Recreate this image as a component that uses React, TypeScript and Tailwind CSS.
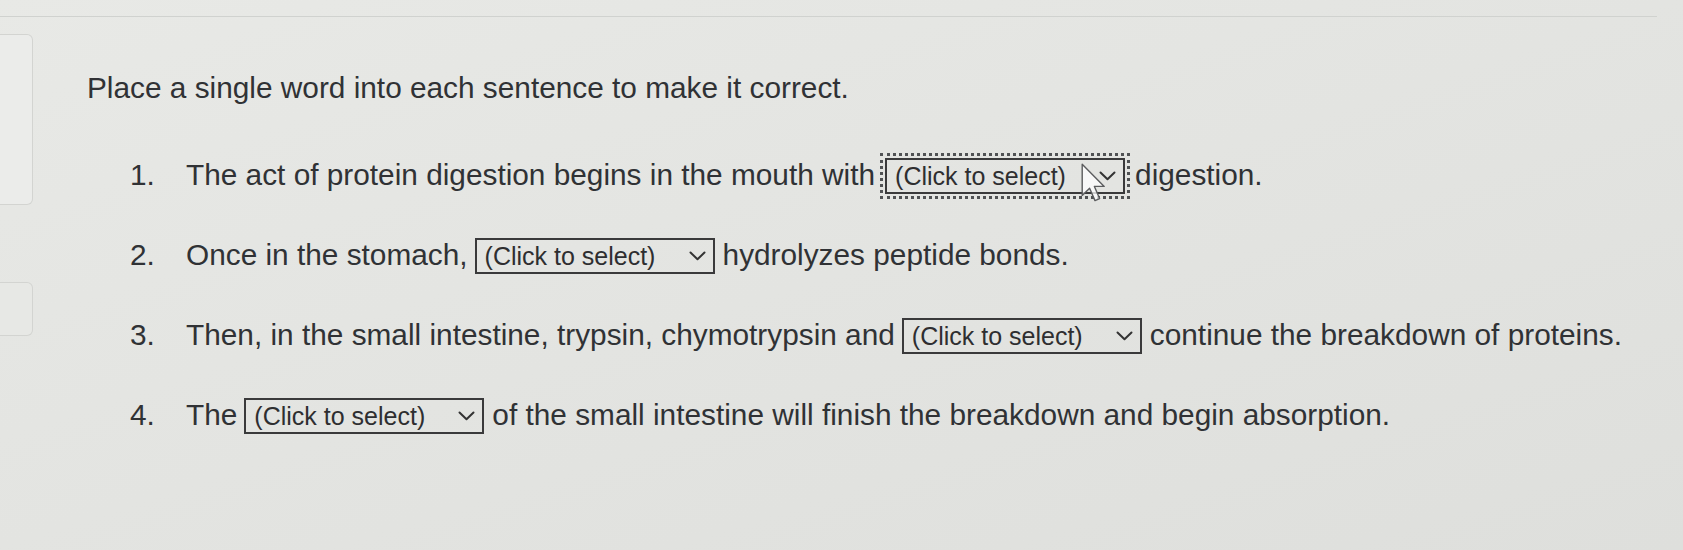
import React from "react";

const sentences: { before: string; after: string; focused?: boolean }[] = [
  { before: "The act of protein digestion begins in the mouth with", after: "digestion.", focused: true },
  { before: "Once in the stomach,", after: "hydrolyzes peptide bonds." },
  { before: "Then, in the small intestine, trypsin, chymotrypsin and", after: "continue the breakdown of proteins." },
  { before: "The", after: "of the small intestine will finish the breakdown and begin absorption." },
];

function Chevron() {
  return (
    <svg width="17" height="10" viewBox="0 0 17 10" fill="none" className="shrink-0">
      <polyline points="1.5,1.5 8.5,8.3 15.5,1.5" stroke="#333" strokeWidth="2" strokeLinecap="round" strokeLinejoin="round" />
    </svg>
  );
}

// Mouse pointer hovering the focused dropdown in the first sentence.
function Pointer() {
  return (
    <svg
      width="25"
      height="39"
      viewBox="0 0 12.5 19.5"
      className="pointer-events-none absolute left-[196px] top-[5px]"
    >
      <path
        d="M0.6 0.6 L0.6 16.2 L4.3 12.6 L7 18.8 L9.3 17.8 L6.7 11.7 L11.6 11.7 Z"
        fill="rgba(255,255,255,0.75)"
        stroke="#5b5c5e"
        strokeWidth="0.7"
        strokeLinejoin="round"
      />
    </svg>
  );
}

function SelectBox({ focused }: { focused?: boolean }) {
  return (
    <span className="relative inline-flex">
      <span
        role="combobox"
        className={`inline-flex h-[36px] w-[240px] items-center justify-between border-2 border-[#3a3a3b] pl-[8px] pr-[7px] text-[25px] leading-[32px] text-[#2e2e30] ${
          focused ? "outline-3 outline-offset-2 outline-dotted outline-[#505254]" : ""
        }`}
      >
        <span>(Click to select)</span>
        <Chevron />
      </span>
      {focused && <Pointer />}
    </span>
  );
}

export default function App() {
  return (
    <div
      className="h-[550px] w-[1683px] overflow-hidden bg-linear-to-br from-[#e8e9e6] via-[#e3e4e1] to-[#dedfdc] pt-[16px] text-[#303235]"
      style={{ fontFamily: '"Liberation Sans", Arial, sans-serif' }}
    >
      <div className="mr-[26px] h-px bg-[#d0d2cf]" />
      <div className="flex">
        <div className="flex w-[33px] shrink-0 flex-col">
          <div className="mt-[17px] h-[171px] rounded-r-[6px] border border-l-0 border-[#d3d4d1] bg-[#ebecea]" />
          <div className="mt-[77px] h-[54px] rounded-r-[6px] border border-l-0 border-[#d3d4d1] bg-[#e7e8e5]" />
        </div>
        <div className="ml-[54px] flex flex-col">
          <p className="mt-[53px] text-[29.8px] leading-[36px]">
            Place a single word into each sentence to make it correct.
          </p>
          <ol className="mt-[51px] ml-[43px] flex flex-col gap-[42px]">
            {sentences.map((s, i) => (
              <li key={i} className="flex h-[38px] items-baseline text-[29.8px] leading-[36px] whitespace-nowrap">
                <span className="w-[56px] shrink-0">{i + 1}.</span>
                <span>{s.before}</span>
                <span className={s.focused ? "ml-[10px] mr-[10px]" : "ml-[7px] mr-[8px]"}>
                  <SelectBox focused={s.focused} />
                </span>
                <span>{s.after}</span>
              </li>
            ))}
          </ol>
        </div>
      </div>
    </div>
  );
}
